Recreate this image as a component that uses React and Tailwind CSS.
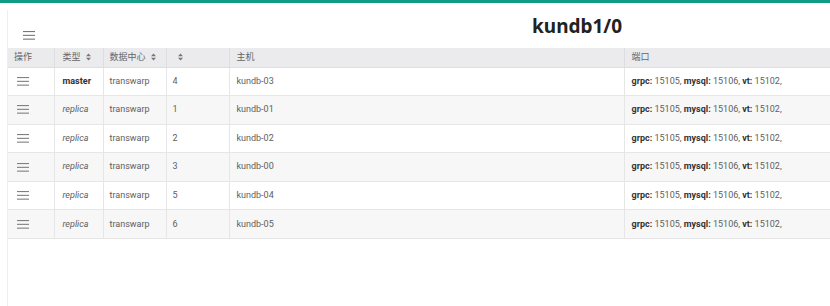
import React from "react";

const Menu = ({ className, color = "#808080" }) => (
  <svg className={className} width="12" height="9" viewBox="0 0 12 9">
    <rect x="0" y="0" width="12" height="1.1" fill={color} />
    <rect x="0" y="3.8" width="12" height="1.1" fill={color} />
    <rect x="0" y="7.6" width="12" height="1.1" fill={color} />
  </svg>
);

const Sort = () => (
  <svg width="5" height="8" viewBox="0 0 5 8" className="inline-block ml-[5px] align-[-1px]">
    <path d="M0 3.2 L2.5 0.4 L5 3.2 Z" fill="#777" />
    <path d="M0 4.8 L2.5 7.6 L5 4.8 Z" fill="#777" />
  </svg>
);

const rows = [
  ["master", "4", "kundb-03"],
  ["replica", "1", "kundb-01"],
  ["replica", "2", "kundb-02"],
  ["replica", "3", "kundb-00"],
  ["replica", "5", "kundb-04"],
  ["replica", "6", "kundb-05"],
];

export default function App() {
  return (
    <div className="w-[830px] h-[306px] bg-white overflow-hidden font-['Roboto','Noto_Sans_CJK_SC',sans-serif]">
      <div className="h-[3px] bg-[#0f9b84]" />
      <div className="ml-[7px] mt-[7px] h-[296px] border-l border-[#eeeeee]">
        <div className="relative h-[38px]">
          <Menu className="absolute left-[15px] top-[21px]" color="#777" />
          <div className="absolute left-[524px] top-[4px] text-[19px] font-bold text-[#222] leading-[24px] font-['Noto_Sans',sans-serif]">kundb1/0</div>
        </div>
        <table className="border-collapse text-[9px] text-[#606060] table-fixed w-[823px]">
          <colgroup>
            <col className="w-[46px]" />
            <col className="w-[49px]" />
            <col className="w-[63px]" />
            <col className="w-[63px]" />
            <col className="w-[395px]" />
            <col />
          </colgroup>
          <thead>
            <tr className="h-[19px] bg-[#ebebee] text-[#666]">
              <th className="text-left font-normal px-[6px] border-r border-b border-[#dedede]">操作</th>
              <th className="text-left font-normal px-[8px] border-r border-b border-[#dedede]">类型<Sort /></th>
              <th className="text-left font-normal px-[6px] border-r border-b border-[#dedede]">数据中心<Sort /></th>
              <th className="text-left font-normal px-[6px] border-r border-b border-[#dedede]"><Sort /></th>
              <th className="text-left font-normal px-[7px] border-r border-b border-[#dedede]">主机</th>
              <th className="text-left font-normal px-[7px] border-b border-[#dedede]">端口</th>
            </tr>
          </thead>
          <tbody>
            {rows.map((r, i) => (
              <tr key={i} className={`h-[28.6px] ${i % 2 === 1 ? "bg-[#f7f7f7]" : "bg-white"}`}>
                <td className="px-[9px] border-r border-b border-[#e6e6e6]"><Menu className="block" /></td>
                <td className={`px-[8px] border-r border-b border-[#e6e6e6] ${i === 0 ? "font-bold text-[#333]" : "italic"}`}>{r[0]}</td>
                <td className="px-[6px] border-r border-b border-[#e6e6e6]">transwarp</td>
                <td className="px-[6px] border-r border-b border-[#e6e6e6]">{r[1]}</td>
                <td className="px-[7px] border-r border-b border-[#e6e6e6]">{r[2]}</td>
                <td className="px-[7px] border-b border-[#e6e6e6]">
                  <b className="text-[#333]">grpc:</b> 15105, <b className="text-[#333]">mysql:</b> 15106, <b className="text-[#333]">vt:</b> 15102,
                </td>
              </tr>
            ))}
          </tbody>
        </table>
      </div>
    </div>
  );
}
